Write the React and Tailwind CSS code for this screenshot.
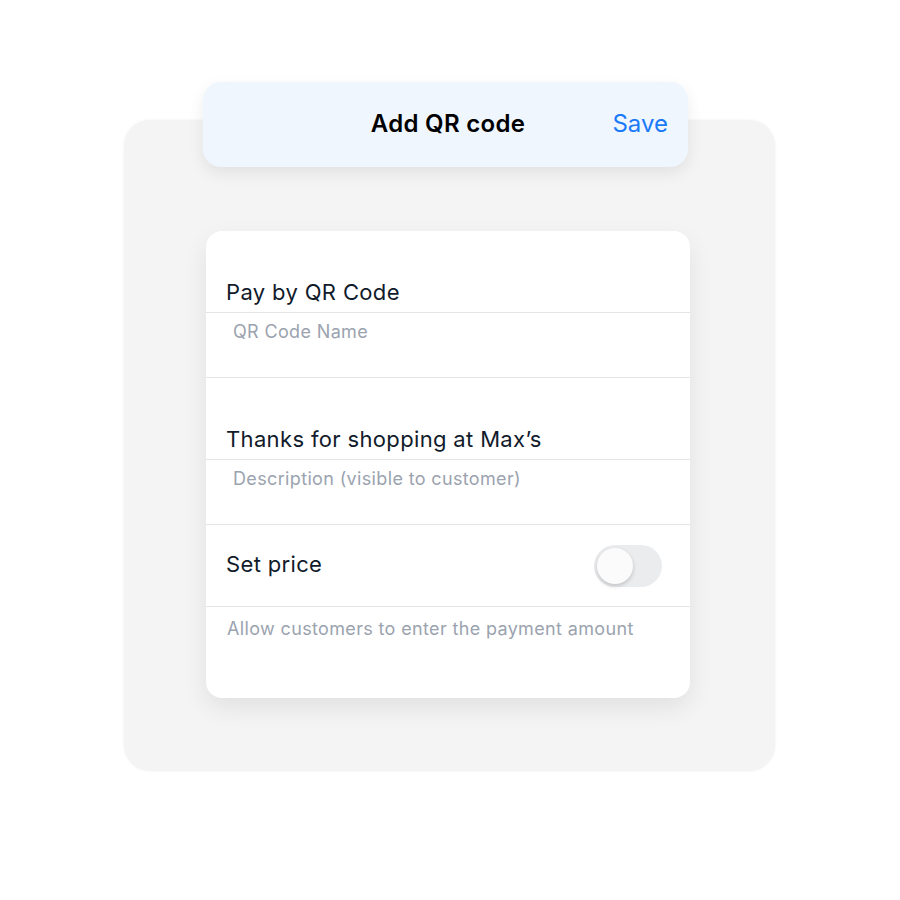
import React from 'react';

function Divider() {
  return <div className="h-px bg-[#e3e5e8]" />;
}

function Toggle() {
  return (
    <div className="w-[68px] h-[42px] rounded-full bg-[#ebecee] p-[3px] flex items-center">
      <div className="w-[36px] h-[36px] rounded-full bg-[#fbfbfc] shadow-[0_2px_4px_rgba(0,0,0,0.18)]" />
    </div>
  );
}

export default function App() {
  return (
    <div
      className="w-[900px] h-[900px] bg-white pt-[120px] pl-[124px]"
      style={{ fontFamily: 'Inter, "Noto Sans", sans-serif' }}
    >
      <div className="relative w-[651px] h-[651px] rounded-[26px] bg-[#f4f4f4] shadow-[0_0_3px_rgba(0,0,0,0.06)] pt-[111px] pl-[82px]">
        {/* top bar lying over the panel edge */}
        <div className="absolute left-[79px] top-[-38px] w-[485px] h-[85px] rounded-[18px] bg-[#eff6fe] shadow-[0_6px_16px_rgba(0,0,0,0.08)] flex items-center justify-center">
          <span className="-mt-[2px] ml-[5px] text-[24px] font-semibold text-black tracking-[0.3px]">Add QR code</span>
          <span className="absolute right-[20px] -mt-[2px] text-[24px] text-[#1a7af8]">Save</span>
        </div>

        <div className="w-[484px] h-[467px] rounded-[16px] bg-white shadow-[0_10px_24px_rgba(0,0,0,0.08)] flex flex-col overflow-hidden tracking-[0.35px]">
          <div className="h-[81px] flex items-end pl-[20px] pb-[6px] text-[22px] leading-[28px] text-[#111b2b]">
            Pay by QR Code
          </div>
          <Divider />
          <div className="h-[64px] pl-[27px] pt-[7px] text-[18px] leading-[24px] text-[#9ba3af]">
            QR Code Name
          </div>
          <Divider />
          <div className="h-[81px] flex items-end pl-[20px] pb-[6px] text-[22px] leading-[28px] text-[#111b2b]">
            Thanks for shopping at Max’s
          </div>
          <Divider />
          <div className="h-[64px] pl-[27px] pt-[7px] text-[18px] leading-[24px] text-[#9ba3af]">
            Description (visible to customer)
          </div>
          <Divider />
          <div className="h-[81px] flex items-center justify-between pl-[20px] pr-[28px] text-[22px] leading-[28px] text-[#111b2b]">
            <span className="-mt-[4px]">Set price</span>
            <Toggle />
          </div>
          <Divider />
          <div className="pl-[21px] pt-[10px] text-[18px] leading-[24px] text-[#9ba3af]">
            Allow customers to enter the payment amount
          </div>
        </div>
      </div>
    </div>
  );
}
